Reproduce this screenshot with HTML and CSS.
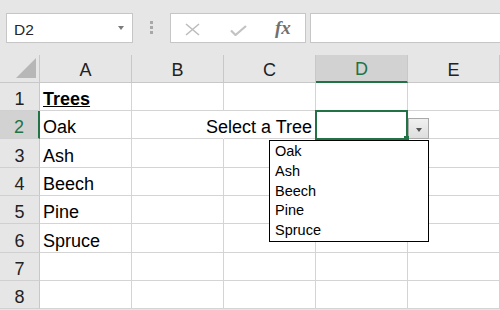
FILE: index.html
```html
<!DOCTYPE html>
<html>
<head>
<meta charset="utf-8">
<link rel="stylesheet" href="styles.css">
</head>
<body>
<div class="topbar">
  <div class="namebox"><span class="nb-text">D2</span><span class="nb-arrow"></span></div>
  <div class="dots"><i></i><i></i><i></i></div>
  <div class="fbtns">
    <svg class="ic-x" width="15" height="13" viewBox="0 0 15 13"><path d="M1 1L14 12M14 1L1 12" stroke="#bdbdbd" stroke-width="1.6" fill="none"/></svg>
    <svg class="ic-check" width="17" height="11" viewBox="0 0 17 11"><path d="M1 5.5L5.5 10L16 1" fill="none" stroke="#c3c3c3" stroke-width="2.2"/></svg>
    <span class="fx">fx</span>
  </div>
  <div class="finput"></div>
</div>
<div class="sheet">
  <div class="c corner"><svg width="20" height="20" viewBox="0 0 20 20"><polygon points="20,0 20,20 0,20" fill="#b7b7b7"/></svg></div>
  <div class="c h">A</div>
  <div class="c h">B</div>
  <div class="c h">C</div>
  <div class="c h hsel">D</div>
  <div class="c h">E</div>

  <div class="c r">1</div>
  <div class="c"><span class="title">Trees</span></div>
  <div class="c"></div>
  <div class="c"></div>
  <div class="c"></div>
  <div class="c"></div>

  <div class="c r rsel">2</div>
  <div class="c">Oak</div>
  <div class="c noright"></div>
  <div class="c right">Select a Tree</div>
  <div class="c sel">
    <span class="selbox"></span>
    <span class="ddbtn"><i></i></span>
    <div class="ddlist">
      <div class="item">Oak</div>
      <div class="item">Ash</div>
      <div class="item">Beech</div>
      <div class="item">Pine</div>
      <div class="item">Spruce</div>
    </div>
    <span class="handle"></span>
  </div>
  <div class="c"></div>

  <div class="c r">3</div>
  <div class="c">Ash</div>
  <div class="c"></div>
  <div class="c"></div>
  <div class="c"></div>
  <div class="c"></div>

  <div class="c r">4</div>
  <div class="c">Beech</div>
  <div class="c"></div>
  <div class="c"></div>
  <div class="c"></div>
  <div class="c"></div>

  <div class="c r">5</div>
  <div class="c">Pine</div>
  <div class="c"></div>
  <div class="c"></div>
  <div class="c"></div>
  <div class="c"></div>

  <div class="c r">6</div>
  <div class="c">Spruce</div>
  <div class="c"></div>
  <div class="c"></div>
  <div class="c"></div>
  <div class="c"></div>

  <div class="c r">7</div>
  <div class="c"></div>
  <div class="c"></div>
  <div class="c"></div>
  <div class="c"></div>
  <div class="c"></div>

  <div class="c r">8</div>
  <div class="c"></div>
  <div class="c"></div>
  <div class="c"></div>
  <div class="c"></div>
  <div class="c"></div>
</div>
</body>
</html>
```

FILE: styles.css
```css
html, body {
  margin: 0;
  padding: 0;
  background: #e6e6e6;
  overflow: hidden;
}
body {
  width: 500px;
  height: 310px;
  font-family: "Liberation Sans", Arial, sans-serif;
}

/* formula bar */
.topbar {
  height: 55px;
  box-sizing: border-box;
  padding-top: 13px;
  display: flex;
  align-items: flex-start;
}
.namebox {
  margin-left: 6px;
  width: 127px;
  height: 30px;
  box-sizing: border-box;
  border: 1px solid #c6c6c6;
  background: #fff;
  display: flex;
  align-items: center;
  padding: 2px 0 0 7px;
}
.nb-text {
  font-size: 15.5px;
  line-height: 17px;
  color: #262626;
}
.nb-arrow {
  margin-left: auto;
  margin-right: 8px;
  margin-top: -3px;
  width: 0;
  height: 0;
  border-left: 3.5px solid transparent;
  border-right: 3.5px solid transparent;
  border-top: 4px solid #7a7a7a;
}
.dots {
  margin-left: 17px;
  margin-top: 8px;
  display: flex;
  flex-direction: column;
  gap: 2px;
}
.dots i {
  display: block;
  width: 3px;
  height: 3px;
  background: #a8a8a8;
}
.fbtns {
  margin-left: 17px;
  width: 136px;
  height: 30px;
  box-sizing: border-box;
  border: 1px solid #c6c6c6;
  background: #fff;
  display: flex;
  align-items: center;
}
.ic-x {
  margin-left: 14px;
  margin-top: 2px;
}
.ic-check {
  margin-left: 30px;
  margin-top: 4px;
}
.fx {
  margin-left: 28px;
  font-family: "Liberation Serif", "Times New Roman", serif;
  font-style: italic;
  font-weight: bold;
  font-size: 19px;
  line-height: 20px;
  color: #707070;
}
.finput {
  margin-left: 4px;
  flex: 1;
  height: 30px;
  box-sizing: border-box;
  border: 1px solid #c6c6c6;
  border-right: none;
  background: #fff;
}

/* sheet */
.sheet {
  display: grid;
  grid-template-columns: 40px repeat(5, 92px);
  grid-template-rows: 28px 28px 28px 29px 28px 28px 29px 28px 28px;
}
.c {
  box-sizing: border-box;
  border-right: 1px solid #d4d4d4;
  border-bottom: 1px solid #d4d4d4;
  background: #fff;
  display: flex;
  align-items: flex-end;
  padding: 0 3px 1px;
  font-size: 18px;
  line-height: 20px;
  color: #000;
  white-space: nowrap;
  min-width: 0;
}
.corner {
  background: #e6e6e6;
  border-color: #c8c8c8;
  justify-content: flex-end;
  padding: 0 3px 4px 0;
}
.corner svg {
  display: block;
}
.h {
  background: #e6e6e6;
  border-right-color: #c8c8c8;
  border-bottom-color: #c8c8c8;
  justify-content: center;
  align-items: center;
  padding: 2px 3px 0;
  color: #222;
}
.hsel {
  background: #d2d2d2;
  color: #217346;
  border-bottom: 2px solid #217346;
}
.r {
  background: #e6e6e6;
  border-right-color: #c8c8c8;
  border-bottom-color: #d0d0d0;
  justify-content: center;
  color: #222;
}
.rsel {
  background: #d2d2d2;
  color: #217346;
  border-right: 2px solid #217346;
}
.title {
  font-weight: bold;
  text-decoration: underline;
}
.noright {
  border-right-color: #fff;
}
.right {
  justify-content: flex-end;
}

/* selected cell + validation dropdown */
.sel {
  position: relative;
}
.selbox {
  position: absolute;
  top: -1px;
  left: -1px;
  right: -1px;
  bottom: -2px;
  border: 2px solid #217346;
}
.handle {
  position: absolute;
  left: 88px;
  top: 25px;
  width: 5px;
  height: 4px;
  background: #217346;
  z-index: 3;
}
.ddbtn {
  position: absolute;
  left: 92px;
  top: 7px;
  width: 21px;
  height: 21px;
  box-sizing: border-box;
  border: 1px solid #a9a9a9;
  background: linear-gradient(#f0f0f0, #dedede);
  display: flex;
  align-items: center;
  justify-content: center;
  z-index: 2;
}
.ddbtn i {
  display: block;
  width: 0;
  height: 0;
  margin-top: 3px;
  border-left: 3.5px solid transparent;
  border-right: 3.5px solid transparent;
  border-top: 4px solid #555;
}
.ddlist {
  position: absolute;
  left: -47px;
  top: 29px;
  width: 160px;
  box-sizing: border-box;
  border: 1px solid #000;
  background: #fff;
  padding-top: 1px;
  z-index: 2;
}
.item {
  font-size: 14.5px;
  line-height: 19.8px;
  padding-left: 5px;
  color: #000;
}
```
